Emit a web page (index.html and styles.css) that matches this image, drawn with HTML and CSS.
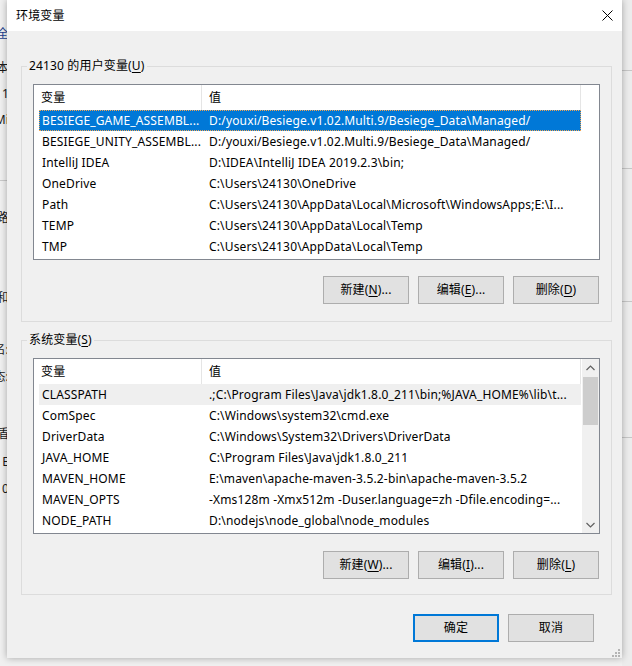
FILE: index.html
```html
<!DOCTYPE html>
<html>
<head>
<meta charset="utf-8">
<link rel="stylesheet" href="styles.css">
</head>
<body>
<div class="backdrop-left">
  <div class="frag blue m26">一全</div>
  <div class="frag m18">本</div>
  <div class="frag m10">1</div>
  <div class="frag m10">Mi</div>
  <div class="bline m52"></div>
  <div class="frag m29">路</div>
  <div class="frag m64">和</div>
  <div class="frag m36">名:</div>
  <div class="frag m11">态:</div>
  <div class="frag m41">盾</div>
  <div class="frag m12">E</div>
  <div class="frag m11">0</div>
</div>
<div class="backdrop-right">
  <div class="rline r70"></div>
  <div class="rline r97"></div>
  <div class="rline r132"></div>
  <div class="rline r135"></div>
</div>

<div class="dialog">
  <div class="titlebar">
    <span class="title">环境变量</span>
    <svg class="close" width="11" height="11" viewBox="0 0 11 11"><path d="M0.5 0.5 L10.5 10.5 M10.5 0.5 L0.5 10.5" stroke="#000" stroke-width="1" fill="none"/></svg>
  </div>
  <div class="content">
    <fieldset class="group group-user">
      <legend>24130 的用户变量(<u>U</u>)</legend>
      <div class="list">
        <div class="list-main">
          <div class="lv-header">
            <div class="hc c1">变量</div>
            <div class="hc c2">值</div>
          </div>
          <div class="row selected"><div class="cell c1">BESIEGE_GAME_ASSEMBL...</div><div class="cell c2">D:/youxi/Besiege.v1.02.Multi.9/Besiege_Data\Managed/</div></div>
          <div class="row"><div class="cell c1">BESIEGE_UNITY_ASSEMBL...</div><div class="cell c2">D:/youxi/Besiege.v1.02.Multi.9/Besiege_Data\Managed/</div></div>
          <div class="row"><div class="cell c1">IntelliJ IDEA</div><div class="cell c2">D:\IDEA\IntelliJ IDEA 2019.2.3\bin;</div></div>
          <div class="row"><div class="cell c1">OneDrive</div><div class="cell c2">C:\Users\24130\OneDrive</div></div>
          <div class="row"><div class="cell c1">Path</div><div class="cell c2">C:\Users\24130\AppData\Local\Microsoft\WindowsApps;E:\I...</div></div>
          <div class="row"><div class="cell c1">TEMP</div><div class="cell c2">C:\Users\24130\AppData\Local\Temp</div></div>
          <div class="row"><div class="cell c1">TMP</div><div class="cell c2">C:\Users\24130\AppData\Local\Temp</div></div>
        </div>
      </div>
      <div class="btn-row">
        <button class="btn">新建(<u>N</u>)...</button>
        <button class="btn">编辑(<u>E</u>)...</button>
        <button class="btn">删除(<u>D</u>)</button>
      </div>
    </fieldset>

    <fieldset class="group group-sys">
      <legend>系统变量(<u>S</u>)</legend>
      <div class="list">
        <div class="list-main">
          <div class="lv-header">
            <div class="hc c1">变量</div>
            <div class="hc c2">值</div>
          </div>
          <div class="row hot"><div class="cell c1">CLASSPATH</div><div class="cell c2">.;C:\Program Files\Java\jdk1.8.0_211\bin;%JAVA_HOME%\lib\t...</div></div>
          <div class="row"><div class="cell c1">ComSpec</div><div class="cell c2">C:\Windows\system32\cmd.exe</div></div>
          <div class="row"><div class="cell c1">DriverData</div><div class="cell c2">C:\Windows\System32\Drivers\DriverData</div></div>
          <div class="row"><div class="cell c1">JAVA_HOME</div><div class="cell c2">C:\Program Files\Java\jdk1.8.0_211</div></div>
          <div class="row"><div class="cell c1">MAVEN_HOME</div><div class="cell c2">E:\maven\apache-maven-3.5.2-bin\apache-maven-3.5.2</div></div>
          <div class="row"><div class="cell c1">MAVEN_OPTS</div><div class="cell c2">-Xms128m -Xmx512m -Duser.language=zh -Dfile.encoding=...</div></div>
          <div class="row"><div class="cell c1">NODE_PATH</div><div class="cell c2">D:\nodejs\node_global\node_modules</div></div>
        </div>
        <div class="vscroll">
          <div class="sb-arrow"><svg width="9" height="6" viewBox="0 0 9 6"><path d="M0.5 5 L4.5 1 L8.5 5" stroke="#606060" stroke-width="1.2" fill="none"/></svg></div>
          <div class="sb-track"><div class="sb-thumb"></div></div>
          <div class="sb-arrow"><svg width="9" height="6" viewBox="0 0 9 6"><path d="M0.5 1 L4.5 5 L8.5 1" stroke="#606060" stroke-width="1.2" fill="none"/></svg></div>
        </div>
      </div>
      <div class="btn-row">
        <button class="btn">新建(<u>W</u>)...</button>
        <button class="btn">编辑(<u>I</u>)...</button>
        <button class="btn">删除(<u>L</u>)</button>
      </div>
    </fieldset>

    <div class="dlg-buttons">
      <button class="btn default">确定</button>
      <button class="btn">取消</button>
    </div>
  </div>
  <svg class="grip" width="8" height="8" viewBox="0 0 8 8" fill="#b4b4b4">
    <rect x="6" y="0" width="2" height="2"/>
    <rect x="3" y="3" width="2" height="2"/><rect x="6" y="3" width="2" height="2"/>
    <rect x="0" y="6" width="2" height="2"/><rect x="3" y="6" width="2" height="2"/><rect x="6" y="6" width="2" height="2"/>
  </svg>
</div>
</body>
</html>
```

FILE: styles.css
```css
* { box-sizing: border-box; }
html, body { margin: 0; padding: 0; }
body {
  width: 632px;
  height: 666px;
  overflow: hidden;
  position: relative;
  background: #f0f0f0;
  font-family: "Noto Sans", "Noto Sans CJK SC", sans-serif;
  font-size: 12px;
  letter-spacing: 0.15px;
  color: #000;
}

/* background window pieces */
.backdrop-left {
  position: absolute;
  left: 0;
  top: 0;
  width: 9px;
  height: 666px;
  overflow: hidden;
  display: flex;
  flex-direction: column;
}
.frag {
  height: 16px;
  line-height: 16px;
  display: flex;
  justify-content: flex-end;
  white-space: nowrap;
  color: #1a1a1a;
}
.frag.blue { color: #23418f; }
.bline { height: 1px; background: #c9c9c9; flex: none; }
.m10 { margin-top: 10px; } .m11 { margin-top: 11px; } .m12 { margin-top: 12px; }
.m18 { margin-top: 18px; } .m26 { margin-top: 26px; } .m29 { margin-top: 29px; }
.m36 { margin-top: 36px; } .m41 { margin-top: 41px; } .m52 { margin-top: 52px; }
.m64 { margin-top: 64px; }

.backdrop-right {
  position: absolute;
  right: 0;
  top: 0;
  width: 10px;
  height: 666px;
  background: #ececec;
  display: flex;
  flex-direction: column;
}
.rline { height: 1px; background: #c6c6c6; flex: none; }
.r70 { margin-top: 70px; } .r97 { margin-top: 97px; }
.r132 { margin-top: 132px; } .r135 { margin-top: 135px; }

/* dialog window */
.dialog {
  position: absolute;
  left: 7px;
  top: 0;
  width: 615px;
  height: 658px;
  background: #f0f0f0;
  box-shadow: 0 0 7px rgba(0, 0, 0, 0.32);
  display: flex;
  flex-direction: column;
}
.titlebar {
  height: 31px;
  flex: none;
  background: #fff;
  display: flex;
  align-items: center;
  justify-content: space-between;
  padding: 0 9px 0 9px;
}
.title { line-height: 16px; }
.close { display: block; }

.content {
  padding: 27px 10px 0 14px;
  display: flex;
  flex-direction: column;
}

.group {
  margin: 0;
  min-width: 0;
  border: 1px solid #dcdcdc;
  padding: 10px 11px 17px 11px;
}
.group-sys { margin-top: 10px; padding-bottom: 15px; }
.group legend {
  line-height: 16px;
  height: 16px;
  padding: 0 2px;
  margin-left: -6px;
}
u { text-decoration: underline; text-underline-offset: 2px; }

.list {
  height: 176px;
  border: 1px solid #828790;
  background: #fff;
  display: flex;
}
.list-main {
  flex: 1;
  padding-left: 5px;
  display: flex;
  flex-direction: column;
}
.lv-header {
  height: 25px;
  display: flex;
  flex: none;
}
.hc {
  height: 25px;
  line-height: 25px;
  border-right: 1px solid #e5e5e5;
  white-space: nowrap;
}
.c1 { width: 163px; flex: none; }
.c2 { width: 379px; flex: none; }
.hc.c1 { padding-left: 2px; }
.hc.c2 { padding-left: 7px; }

.row {
  height: 21px;
  width: 542px;
  display: flex;
  align-items: center;
  flex: none;
}
.cell {
  white-space: nowrap;
  overflow: hidden;
  line-height: 21px;
}
.cell.c1 { padding-left: 3px; }
.cell.c2 { padding-left: 7px; }
.row.selected {
  background: #0078d7;
  color: #fff;
  outline: 1px dotted #f2a552;
  outline-offset: -1px;
}
.row.hot { background: #efefef; }

.vscroll {
  width: 17px;
  flex: none;
  background: #f0f0f0;
  display: flex;
  flex-direction: column;
}
.sb-arrow {
  height: 17px;
  flex: none;
  display: flex;
  align-items: center;
  justify-content: center;
}
.sb-track { flex: 1; padding: 1px 1px 0 1px; }
.sb-thumb { height: 48px; background: #cdcdcd; }

.btn-row {
  display: flex;
  justify-content: flex-end;
  gap: 9px;
  margin-top: 16px;
  padding-right: 1px;
}
.group-sys .btn-row { margin-top: 17px; }

.btn {
  width: 86px;
  height: 28px;
  margin: 0;
  padding: 0;
  background: #e1e1e1;
  border: 1px solid #adadad;
  font: inherit;
  letter-spacing: inherit;
  color: #000;
  line-height: 16px;
}
.btn.default { border: 2px solid #0078d7; }

.dlg-buttons {
  display: flex;
  justify-content: flex-end;
  gap: 9px;
  margin-top: 19px;
  padding-right: 18px;
}

.grip {
  position: absolute;
  right: 2px;
  bottom: 1px;
}
```
